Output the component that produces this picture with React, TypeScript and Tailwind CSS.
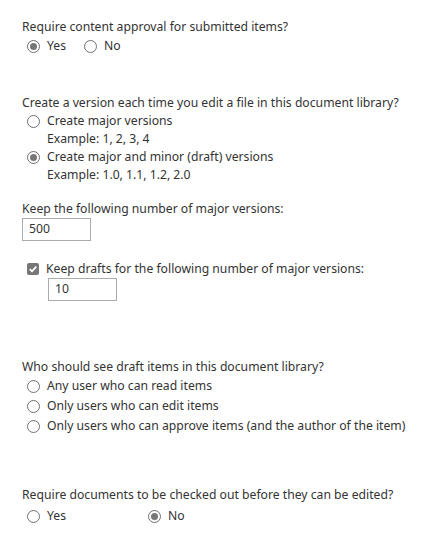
const Radio = ({ checked }: { checked?: boolean }) => (
  <span className="w-[13px] h-[13px] rounded-full border border-[#707070] bg-white flex items-center justify-center shrink-0">
    {checked && <span className="w-[7px] h-[7px] rounded-full bg-[#777]" />}
  </span>
);

const Check = () => (
  <span className="w-[12px] h-[12px] rounded-[2px] bg-[#777] flex items-center justify-center shrink-0">
    <svg width="10" height="10" viewBox="0 0 10 10">
      <path d="M1.8 5.2 L4 7.3 L8.3 2.6" stroke="white" strokeWidth="1.8" fill="none" />
    </svg>
  </span>
);

const Option = ({ label, checked, className = "" }: { label: string; checked?: boolean; className?: string }) => (
  <div className={`flex items-center h-[18px] ${className}`}>
    <span className="w-[25px] pl-[5px] flex">
      <Radio checked={checked} />
    </span>
    <span>{label}</span>
  </div>
);

export default function App() {
  return (
    <div
      className="w-[425px] h-[541px] bg-white text-[#333] text-[12.2px] pl-[22px] pt-[18px] flex flex-col overflow-hidden"
      style={{ fontFamily: '"Noto Sans", sans-serif' }}
    >
      <div className="h-[18px] flex items-center">Require content approval for submitted items?</div>
      <div className="flex h-[19px] mt-[1px]">
        <Option label="Yes" checked className="w-[57px]" />
        <Option label="No" />
      </div>

      <div className="h-[18px] flex items-center mt-[38px]">Create a version each time you edit a file in this document library?</div>
      <Option label="Create major versions" />
      <div className="h-[18px] flex items-center pl-[25px]">Example: 1, 2, 3, 4</div>
      <Option label="Create major and minor (draft) versions" checked />
      <div className="h-[18px] flex items-center pl-[25px]">Example: 1.0, 1.1, 1.2, 2.0</div>

      <div className="h-[18px] flex items-center mt-[16px]">Keep the following number of major versions:</div>
      <div className="w-[69px] h-[23px] border border-[#ababab] flex items-center pl-[6px]">500</div>

      <div className="flex items-center h-[18px] mt-[19px]">
        <span className="w-[24px] pl-[5px] flex">
          <Check />
        </span>
        <span>Keep drafts for the following number of major versions:</span>
      </div>
      <div className="ml-[26px] w-[69px] h-[23px] border border-[#ababab] flex items-center pl-[6px]">10</div>

      <div className="h-[18px] flex items-center mt-[57px]">Who should see draft items in this document library?</div>
      <Option label="Any user who can read items" className="h-[20px]" />
      <Option label="Only users who can edit items" className="h-[20px]" />
      <Option label="Only users who can approve items (and the author of the item)" className="h-[20px]" />

      <div className="h-[18px] flex items-center mt-[50px]">Require documents to be checked out before they can be edited?</div>
      <div className="flex h-[19px] mt-[3px]">
        <Option label="Yes" className="w-[121px]" />
        <Option label="No" checked />
      </div>
    </div>
  );
}
